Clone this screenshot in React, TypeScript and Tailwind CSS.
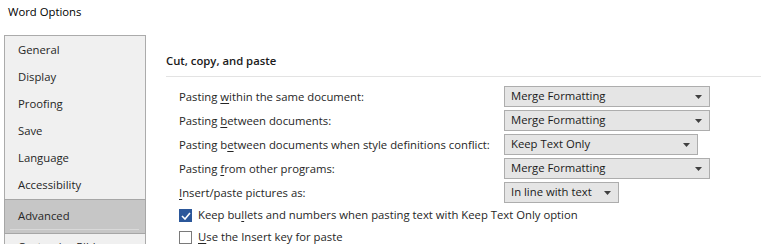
import React from "react";

type Row = {
  label: React.ReactNode;
  value: string;
  width: string;
};

const NAV = ["General", "Display", "Proofing", "Save", "Language", "Accessibility"];

function Key({ children }: { children: React.ReactNode }) {
  return <span className="underline underline-offset-2">{children}</span>;
}

function Dropdown({ value, width }: { value: string; width: string }) {
  return (
    <div
      className={`${width} h-[21px] flex items-center justify-between bg-[#e5e5e5] border border-[#adadad] pl-[6px] pr-[7px] text-[#1a1a1a]`}
    >
      <span className="whitespace-nowrap">{value}</span>
      <svg width="7" height="4" viewBox="0 0 7 4">
        <polygon points="0,0 7,0 3.5,4" fill="#404040" />
      </svg>
    </div>
  );
}

const ROWS: Row[] = [
  { label: <>Pasting <Key>w</Key>ithin the same document:</>, value: "Merge Formatting", width: "w-[206px]" },
  { label: <>Pasting <Key>b</Key>etween documents:</>, value: "Merge Formatting", width: "w-[206px]" },
  { label: <>Pasting b<Key>e</Key>tween documents when style definitions conflict:</>, value: "Keep Text Only", width: "w-[194px]" },
  { label: <>Pasting <Key>f</Key>rom other programs:</>, value: "Merge Formatting", width: "w-[206px]" },
  { label: <><Key>I</Key>nsert/paste pictures as:</>, value: "In line with text", width: "w-[115px]" },
];

export default function App() {
  return (
    <div
      className="w-[761px] h-[244px] overflow-hidden bg-white text-[11.3px] text-[#262626] flex flex-col"
      style={{ fontFamily: '"Segoe UI", "Open Sans", "Noto Sans", sans-serif' }}
    >
      {/* Title */}
      <div className="h-[35px] shrink-0 pl-[8px] pt-[4px] text-black">Word Options</div>

      <div className="flex flex-1 min-h-0">
        {/* Left nav */}
        <div className="ml-[4px] w-[142px] shrink-0 bg-[#f0f0f0] border border-[#ababab] border-b-0 pt-[1px] flex flex-col">
          {NAV.map((item) => (
            <div key={item} className="h-[27px] shrink-0 flex items-center pl-[13px]">
              {item}
            </div>
          ))}
          <div className="relative h-[35px] shrink-0 flex items-center pl-[13px] bg-[#c6c6c6] border border-[#a6a6a6] -mx-px">
            Advanced
            <span className="absolute left-[5px] right-[6px] bottom-[3px] h-px bg-[#d9d9d9]" />
          </div>
          <div className="h-[27px] shrink-0 flex items-center pl-[13px] whitespace-nowrap">Customize Ribbon</div>
        </div>

        {/* Right content */}
        <div className="flex-1 pl-[20px]">
          <div className="h-[41px] flex items-center font-semibold text-[#1a1a1a] pt-[11px]">
            Cut, copy, and paste
          </div>
          <div className="h-px bg-[#e3e3e3]" />
          <div className="pl-[13px] pt-[9px] flex flex-col">
            {ROWS.map((row, i) => (
              <div key={i} className="h-[24px] flex items-start">
                <div className="w-[325px] leading-[21px] whitespace-nowrap">{row.label}</div>
                <Dropdown value={row.value} width={row.width} />
              </div>
            ))}
            <div className="h-[21px] flex items-center gap-[6px] -mt-[1px]">
              <span className="w-[13px] h-[13px] shrink-0 bg-[#2b579a] flex items-center justify-center">
                <svg width="10" height="8" viewBox="0 0 10 8">
                  <polyline points="1,4 4,7 9,1" fill="none" stroke="white" strokeWidth="1.6" />
                </svg>
              </span>
              <span className="whitespace-nowrap">
                Keep bu<Key>l</Key>lets and numbers when pasting text with Keep Text Only option
              </span>
            </div>
            <div className="h-[22px] flex items-center gap-[6px]">
              <span className="w-[13px] h-[13px] shrink-0 bg-white border border-[#7a7a7a]" />
              <span className="whitespace-nowrap">
                <Key>U</Key>se the Insert key for paste
              </span>
            </div>
          </div>
        </div>
      </div>
    </div>
  );
}
